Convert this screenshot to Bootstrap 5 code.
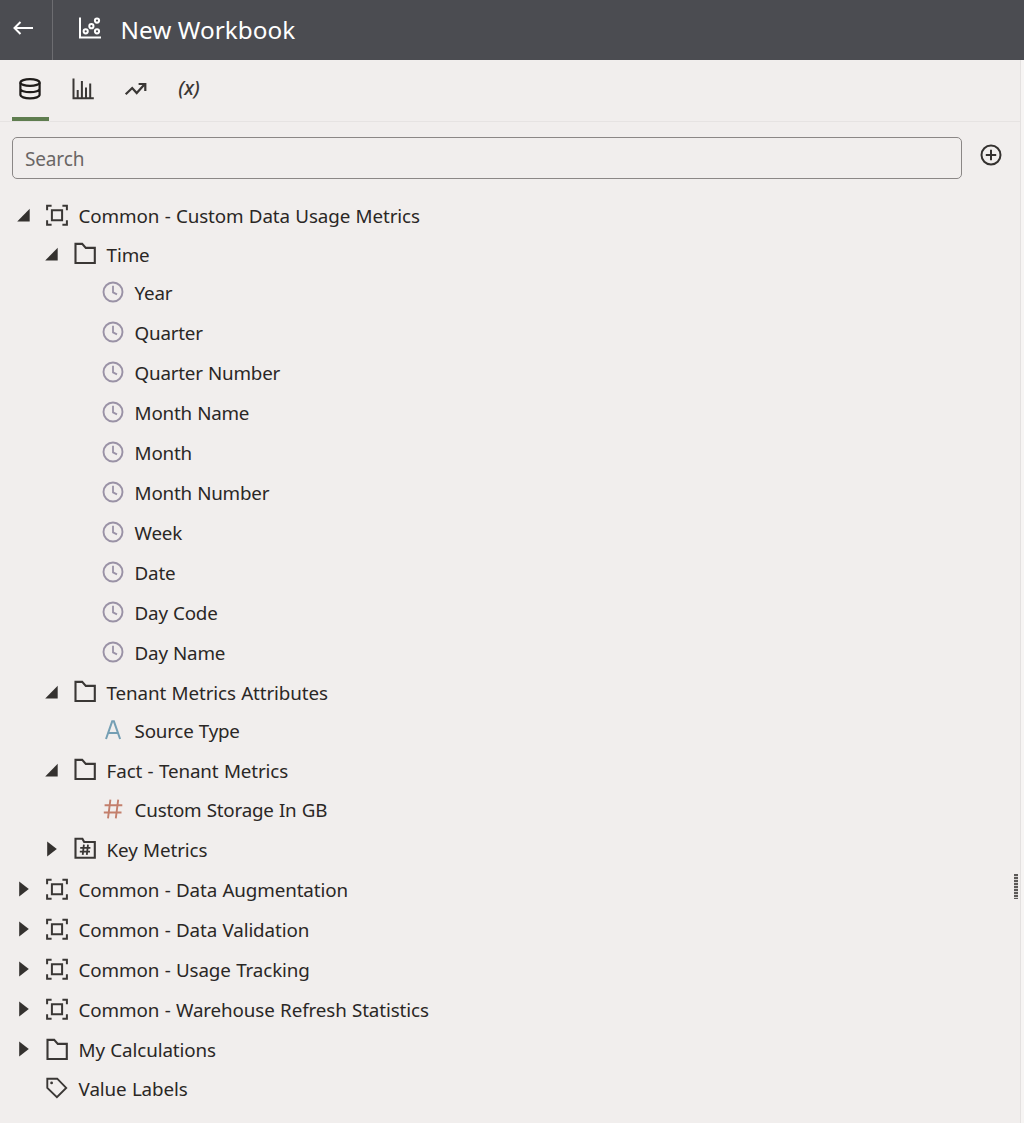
<!DOCTYPE html>
<html lang="en">
<head>
<meta charset="utf-8">
<meta name="viewport" content="width=device-width, initial-scale=1">
<title>New Workbook</title>
<link href="https://cdn.jsdelivr.net/npm/bootstrap@5.3.0/dist/css/bootstrap.min.css" rel="stylesheet">
<style>
  body { background: #f1eeed; color: #2a2725; font-family: "Noto Sans", "Open Sans", sans-serif; overflow: hidden; }
  svg { display: block; flex: none; }
  .app-bar { height: 60px; background: #4b4c51; color: #fff; }
  .back-btn { width: 53px; height: 60px; border: 0; border-right: 1px solid #6d6d71; border-radius: 0; padding: 0 0 5px 12px; color: #fff; }
  .app-bar .back-btn { border-right: 1px solid #6d6d71; }
  .app-title { font-size: 24.3px; line-height: 60px; letter-spacing: .05px; margin: 0 0 0 17.5px; font-weight: 400; }
  .pane-wrap { background: #f7f5f4; }
  .data-pane { width: 1021px; height: 1063px; background: #f1eeed; border-right: 1px solid #e4e1e0; position: relative; }
  .tab-strip { height: 62px; border-bottom: 1px solid #e6e3e2; padding-left: 11.5px; gap: 16px; }
  .tab-btn { width: 37px; height: 60.5px; padding: 17px 0 0; border: 0; border-bottom: 4px solid transparent; border-radius: 0; color: #2a2725; }
  .tab-strip .tab-btn.active { border-bottom: 4px solid #5f7d4f; }
  .param-mark { font-size: 19.5px; font-style: italic; font-weight: 500; line-height: 22px; color: #3a3735; }
  .search-row { padding: 15px 17px 0 12px; gap: 17px; }
  .search-box { width: 950px; flex: none; height: 42px; border: 1px solid #8b8786; border-radius: 5px; background: transparent; font-size: 19px; letter-spacing: -.15px; padding: 2px 12px 0; color: #2a2725; }
  .search-box::placeholder { color: #6a6665; opacity: 1; }
  .add-icon { margin-top: 6px; }
  .tree { padding-top: 17px; }
  .node { height: 40px; padding-left: 15px; }
  .h39 { height: 39px; }
  .h38 { height: 38px; }
  .lvl-1 { padding-left: 43px; }
  .lvl-2 { padding-left: 71px; }
  .node .twist { width: 16px; height: 16px; margin: 11.2px 14px 0 0; }
  .node .glyph { width: 24px; height: 24px; margin: 7px 9.6px 0 0; }
  .lvl-1 .glyph, .lvl-1 .twist { margin-top: 6.4px; }
  .lvl-1 .twist { margin-top: 10.6px; }
  .node .label { font-size: 18.8px; line-height: 40px; letter-spacing: -.11px; word-spacing: .6px; white-space: nowrap; }
  .lvl-2 .label { letter-spacing: -.22px; }
  .time { color: #9a92a6; }
  .attr { color: #759fb4; }
  .fact { color: #c37f6c; }
  .splitter { position: absolute; right: 2px; top: 814px; width: 4px; height: 25px; background: repeating-linear-gradient(#5c5957 0 2px, #d6d3d2 2px 3px); }
</style>
<script src="https://cdn.jsdelivr.net/npm/bootstrap@5.3.0/dist/js/bootstrap.bundle.min.js"></script>
</head>
<body>
<svg width="0" height="0" class="position-absolute" aria-hidden="true">
  <symbol id="open" viewBox="0 0 16 16"><path d="M14.7 1.7V14.5H2.2z" fill="#34312f"/></symbol>
  <symbol id="shut" viewBox="0 0 16 16"><path d="M4.2 .6 13.8 8 4.2 15.4z" fill="#34312f"/></symbol>
  <symbol id="subject" viewBox="0 0 24 24"><path d="M2.1 7.2V2.7H6.6M17.4 2.7H21.9V7.2M21.9 17.3V21.8H17.4M6.6 21.8H2.1V17.3M6.9 7.2H17.1V17.3H6.9z" fill="none" stroke="#3a3735" stroke-width="2"/></symbol>
  <symbol id="folder" viewBox="0 0 24 24"><path d="M2.5 2.9H9.2L12.8 6.9H21.8V22H2.5z" fill="none" stroke="#3a3735" stroke-width="2.1"/></symbol>
  <symbol id="keyfolder" viewBox="0 0 24 24"><path d="M2.5 2.7H9.4L11.2 6H21.8V21.8H2.5z" fill="none" stroke="#3a3735" stroke-width="2.1"/><path d="M10.9 8.6 9.7 18.8M15 8.6 13.8 18.8M7.2 11.8H17.4M6.8 15.7H17" fill="none" stroke="#3a3735" stroke-width="1.8"/></symbol>
  <symbol id="clock" viewBox="0 0 24 24"><circle cx="12" cy="12" r="9.5" fill="none" stroke="currentColor" stroke-width="1.9"/><path d="M12 5.8V12.4L16 14.4" fill="none" stroke="currentColor" stroke-width="1.8"/></symbol>
  <symbol id="attr" viewBox="0 0 24 24"><path d="M5 21 11.2 3.3H12.9L19.1 21M7.1 14.9H17" fill="none" stroke="currentColor" stroke-width="2"/></symbol>
  <symbol id="fact" viewBox="0 0 24 24"><path d="M9.4 2.6 7 21.3M17.2 2.6 14.8 21.3M3.6 8.2H21.3M2.8 15.5H20.5" fill="none" stroke="currentColor" stroke-width="1.9"/></symbol>
  <symbol id="tag" viewBox="0 0 24 24"><path d="M2.3 2.7H12.2L21.2 11.9 11.9 21.2 2.3 11.9z" fill="none" stroke="#3a3735" stroke-width="1.9"/><circle cx="6.6" cy="6.9" r="1.4" fill="#3a3735"/></symbol>
</svg>

<header class="app-bar d-flex align-items-center">
  <button class="btn back-btn" aria-label="Back">
    <svg width="22" height="16" viewBox="0 0 22 16" fill="none" stroke="currentColor" stroke-width="2"><path d="M21 8H2.5M8.5 2 2.5 8 8.5 14"/></svg>
  </button>
  <svg class="ms-4 mb-1" width="26" height="26" viewBox="0 0 26 26" fill="none" stroke="#fff" stroke-width="2"><path d="M3 2.5V22.4H24"/><circle cx="8.7" cy="16.3" r="2.1"/><circle cx="14.4" cy="11.2" r="2.1"/><circle cx="20" cy="5.6" r="2.1"/><circle cx="20" cy="16.3" r="2.1"/></svg>
  <h1 class="app-title">New Workbook</h1>
</header>

<div class="pane-wrap">
<main class="data-pane">
  <nav class="tab-strip d-flex">
    <button class="btn tab-btn active d-flex justify-content-center" aria-label="Data"><svg width="24" height="24" viewBox="0 0 24 24" fill="none" stroke="#1f1c1a" stroke-width="2.2"><ellipse cx="12" cy="5.5" rx="9.6" ry="3.4"/><path d="M2.4 5.5V17.8C2.4 19.8 6.6 21.4 12 21.4S21.6 19.8 21.6 17.8V5.5M2.4 11.7C2.4 13.6 6.6 15.2 12 15.2S21.6 13.6 21.6 11.7"/></svg></button>
    <button class="btn tab-btn d-flex justify-content-center" aria-label="Visualizations"><svg width="24" height="24" viewBox="0 0 24 24" fill="none" stroke="#3a3735" stroke-width="2"><path d="M2.5 1.5V21.2H22.8M6.7 13V20.5M10.9 4V20.5M15 10.5V20.5M19.2 6.5V20.5"/></svg></button>
    <button class="btn tab-btn d-flex justify-content-center" aria-label="Analytics"><svg width="24" height="24" viewBox="0 0 24 24" fill="none" stroke="#3a3735" stroke-width="2.2"><path d="M1.7 17.3 8.2 11 12.7 16 20.6 7.2M14.6 7H21.3V14"/></svg></button>
    <button class="btn tab-btn d-flex justify-content-center" aria-label="Parameters"><span class="param-mark">(x)</span></button>
  </nav>

  <div class="search-row d-flex">
    <input class="search-box" type="text" placeholder="Search" aria-label="Search">
    <svg class="add-icon" width="24" height="24" viewBox="0 0 24 24" fill="none" stroke="#34312f" stroke-width="2"><circle cx="12" cy="12" r="9.5"/><path d="M12 6.8V17.2M6.8 12H17.2"/></svg>
  </div>

  <div class="tree">
    <div class="node h39 d-flex align-items-start"><svg class="twist"><use href="#open"/></svg><svg class="glyph"><use href="#subject"/></svg><span class="label">Common - Custom Data Usage Metrics</span></div>
    <div class="node lvl-1 h38 d-flex align-items-start"><svg class="twist"><use href="#open"/></svg><svg class="glyph"><use href="#folder"/></svg><span class="label">Time</span></div>
    <div class="node lvl-2 d-flex align-items-start"><span class="twist"></span><svg class="glyph time"><use href="#clock"/></svg><span class="label">Year</span></div>
    <div class="node lvl-2 d-flex align-items-start"><span class="twist"></span><svg class="glyph time"><use href="#clock"/></svg><span class="label">Quarter</span></div>
    <div class="node lvl-2 d-flex align-items-start"><span class="twist"></span><svg class="glyph time"><use href="#clock"/></svg><span class="label">Quarter Number</span></div>
    <div class="node lvl-2 d-flex align-items-start"><span class="twist"></span><svg class="glyph time"><use href="#clock"/></svg><span class="label">Month Name</span></div>
    <div class="node lvl-2 d-flex align-items-start"><span class="twist"></span><svg class="glyph time"><use href="#clock"/></svg><span class="label">Month</span></div>
    <div class="node lvl-2 d-flex align-items-start"><span class="twist"></span><svg class="glyph time"><use href="#clock"/></svg><span class="label">Month Number</span></div>
    <div class="node lvl-2 d-flex align-items-start"><span class="twist"></span><svg class="glyph time"><use href="#clock"/></svg><span class="label">Week</span></div>
    <div class="node lvl-2 d-flex align-items-start"><span class="twist"></span><svg class="glyph time"><use href="#clock"/></svg><span class="label">Date</span></div>
    <div class="node lvl-2 d-flex align-items-start"><span class="twist"></span><svg class="glyph time"><use href="#clock"/></svg><span class="label">Day Code</span></div>
    <div class="node lvl-2 d-flex align-items-start"><span class="twist"></span><svg class="glyph time"><use href="#clock"/></svg><span class="label">Day Name</span></div>
    <div class="node lvl-1 h38 d-flex align-items-start"><svg class="twist"><use href="#open"/></svg><svg class="glyph"><use href="#folder"/></svg><span class="label">Tenant Metrics Attributes</span></div>
    <div class="node lvl-2 d-flex align-items-start"><span class="twist"></span><svg class="glyph attr"><use href="#attr"/></svg><span class="label">Source Type</span></div>
    <div class="node lvl-1 h39 d-flex align-items-start"><svg class="twist"><use href="#open"/></svg><svg class="glyph"><use href="#folder"/></svg><span class="label">Fact - Tenant Metrics</span></div>
    <div class="node lvl-2 d-flex align-items-start"><span class="twist"></span><svg class="glyph fact"><use href="#fact"/></svg><span class="label">Custom Storage In GB</span></div>
    <div class="node lvl-1 d-flex align-items-start"><svg class="twist"><use href="#shut"/></svg><svg class="glyph"><use href="#keyfolder"/></svg><span class="label">Key Metrics</span></div>
    <div class="node d-flex align-items-start"><svg class="twist"><use href="#shut"/></svg><svg class="glyph"><use href="#subject"/></svg><span class="label">Common - Data Augmentation</span></div>
    <div class="node d-flex align-items-start"><svg class="twist"><use href="#shut"/></svg><svg class="glyph"><use href="#subject"/></svg><span class="label">Common - Data Validation</span></div>
    <div class="node d-flex align-items-start"><svg class="twist"><use href="#shut"/></svg><svg class="glyph"><use href="#subject"/></svg><span class="label">Common - Usage Tracking</span></div>
    <div class="node d-flex align-items-start"><svg class="twist"><use href="#shut"/></svg><svg class="glyph"><use href="#subject"/></svg><span class="label">Common - Warehouse Refresh Statistics</span></div>
    <div class="node h39 d-flex align-items-start"><svg class="twist"><use href="#shut"/></svg><svg class="glyph"><use href="#folder"/></svg><span class="label">My Calculations</span></div>
    <div class="node d-flex align-items-start"><span class="twist"></span><svg class="glyph"><use href="#tag"/></svg><span class="label">Value Labels</span></div>
  </div>
  <div class="splitter"></div>
</main>
</div>
</body>
</html>
